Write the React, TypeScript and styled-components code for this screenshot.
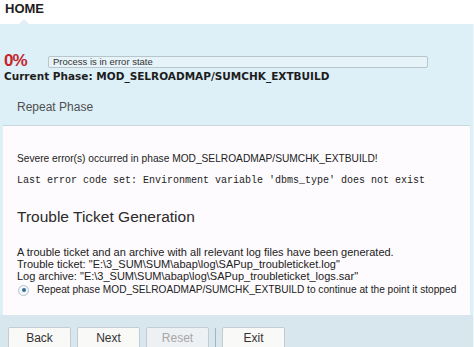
import React from 'react'
import styled, { createGlobalStyle } from 'styled-components'

const GlobalStyle = createGlobalStyle`
  html, body {
    margin: 0;
    padding: 0;
    background: #ffffff;
  }
  body {
    font-family: 'Liberation Sans', Arial, sans-serif;
    color: #222;
  }
`

const Page = styled.div`
  width: 474px;
  height: 347px;
  overflow: hidden;
  display: flex;
  flex-direction: column;
  background: #ffffff;
`

const TopBar = styled.div`
  position: relative;
  height: 24px;
  flex: none;
  padding-left: 5px;
  box-sizing: border-box;
`

const Tab = styled.div`
  font-size: 13px;
  font-weight: bold;
  line-height: 18px;
  color: #1d1d1d;
`

const Notch = styled.div`
  position: absolute;
  left: 19px;
  bottom: 0;
  width: 0;
  height: 0;
  border-left: 5px solid transparent;
  border-right: 5px solid transparent;
  border-bottom: 5px solid #e4eef2;
`

const Shell = styled.div`
  flex: 1;
  display: flex;
  flex-direction: column;
  background: #ddeff7;
  padding: 0 3px;
  border-right: 1px solid #eef7fb;
`

const Status = styled.div`
  padding: 28px 1px 0;
  display: flex;
  flex-direction: column;
`

const ProgressRow = styled.div`
  display: flex;
  align-items: center;
  height: 17px;
`

const Percent = styled.span`
  width: 44px;
  font-size: 17px;
  font-weight: bold;
  letter-spacing: -1px;
  color: #c4262b;
`

const ProgressBox = styled.div`
  width: 380px;
  height: 12px;
  box-sizing: border-box;
  margin-top: 2px;
  border: 1px solid #b8c6cc;
  border-radius: 2px;
  background: #e6f3f8;
  font-size: 9.5px;
  line-height: 10px;
  padding-left: 4px;
  color: #333;
`

const Phase = styled.div`
  margin-top: 1px;
  font-family: 'DejaVu Sans', Verdana, sans-serif;
  font-size: 10.5px;
  font-weight: bold;
  line-height: 13px;
  color: #1d1d1d;
`

const SectionTitle = styled.div`
  padding: 17px 0 11px 14px;
  font-size: 12px;
  line-height: 14px;
  color: #505050;
`

const Card = styled.div`
  height: 190px;
  box-sizing: border-box;
  background: #fdfbfd;
  border-top: 1px solid #c9d7de;
  padding: 26px 14px 0;
  display: flex;
  flex-direction: column;
`

const Message = styled.div`
  font-size: 10.2px;
  line-height: 13px;
  color: #222;
`

const Code = styled.div`
  margin-top: 9px;
  font-family: 'Liberation Mono', 'Courier New', monospace;
  font-size: 10px;
  line-height: 13px;
  color: #222;
`

const Heading = styled.div`
  margin-top: 21px;
  font-size: 15.5px;
  line-height: 18px;
  color: #2a2a2a;
`

const Info = styled.div`
  margin-top: 20px;
  font-size: 11px;
  line-height: 12px;
  color: #222;
`

const Option = styled.label`
  margin-top: 1px;
  display: flex;
  align-items: center;
  gap: 8px;
  font-size: 10.15px;
  line-height: 14px;
  white-space: nowrap;
  color: #222;
  padding-left: 1px;
`

const Radio = styled.span`
  width: 11px;
  height: 11px;
  flex: none;
  box-sizing: border-box;
  border-radius: 50%;
  border: 1px solid #b4c2ca;
  background: #f2f6f8;
  display: flex;
  align-items: center;
  justify-content: center;
  &::after {
    content: '';
    width: 4px;
    height: 4px;
    border-radius: 50%;
    background: #2f6f9a;
  }
`

const ButtonBar = styled.div`
  flex: 1;
  display: flex;
  align-items: flex-start;
  gap: 6px;
  padding: 12px 0 0 8px;
  background: #d8e6ee;
  margin: 0 -3px;
`

const Button = styled.button<{ $disabled?: boolean }>`
  width: 63px;
  height: 22px;
  box-sizing: border-box;
  border: 1px solid #c2ccd2;
  border-radius: 2px;
  background: ${p => (p.$disabled ? '#eef1f3' : '#f9f9f7')};
  color: ${p => (p.$disabled ? '#a6a6a6' : '#333')};
  font-family: 'Liberation Sans', Arial, sans-serif;
  font-size: 12px;
  padding: 0;
`

const Separator = styled.span`
  width: 1px;
  height: 20px;
  background: #a9b4ba;
  margin-top: 1px;
`

export default function App() {
  return (
    <Page>
      <GlobalStyle />
      <TopBar>
        <Tab>HOME</Tab>
        <Notch />
      </TopBar>
      <Shell>
        <Status>
          <ProgressRow>
            <Percent>0%</Percent>
            <ProgressBox>Process is in error state</ProgressBox>
          </ProgressRow>
          <Phase>Current Phase: MOD_SELROADMAP/SUMCHK_EXTBUILD</Phase>
        </Status>
        <SectionTitle>Repeat Phase</SectionTitle>
        <Card>
          <Message>Severe error(s) occurred in phase MOD_SELROADMAP/SUMCHK_EXTBUILD!</Message>
          <Code>Last error code set: Environment variable 'dbms_type' does not exist</Code>
          <Heading>Trouble Ticket Generation</Heading>
          <Info>
            A trouble ticket and an archive with all relevant log files have been generated.
            <br />
            Trouble ticket: "E:\3_SUM\SUM\abap\log\SAPup_troubleticket.log"
            <br />
            Log archive: "E:\3_SUM\SUM\abap\log\SAPup_troubleticket_logs.sar"
          </Info>
          <Option>
            <Radio />
            Repeat phase MOD_SELROADMAP/SUMCHK_EXTBUILD to continue at the point it stopped
          </Option>
        </Card>
        <ButtonBar>
          <Button>Back</Button>
          <Button>Next</Button>
          <Button $disabled>Reset</Button>
          <Separator />
          <Button>Exit</Button>
        </ButtonBar>
      </Shell>
    </Page>
  )
}
